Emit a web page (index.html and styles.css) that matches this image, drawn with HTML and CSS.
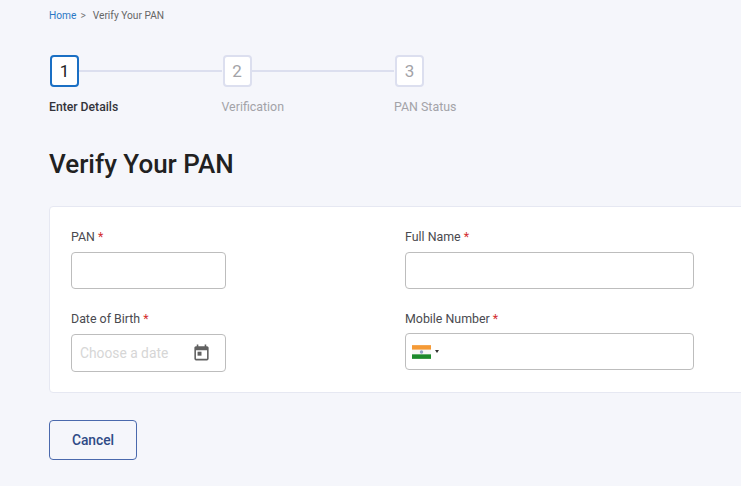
FILE: index.html
```html
<!DOCTYPE html>
<html>
<head>
  <title>Verify Your PAN</title>
  <link rel="stylesheet" href="styles.css">
</head>
<body>
  <div class="page">
    <div class="breadcrumb">
      <a class="crumb-link">Home</a>
      <span class="crumb-sep">&gt;</span>
      <span class="crumb-current">Verify Your PAN</span>
    </div>

    <div class="stepper">
      <div class="step step-active">
        <div class="step-row">
          <div class="step-box">1</div>
          <div class="step-line"></div>
        </div>
        <div class="step-label">Enter Details</div>
      </div>
      <div class="step">
        <div class="step-row">
          <div class="step-box">2</div>
          <div class="step-line"></div>
        </div>
        <div class="step-label">Verification</div>
      </div>
      <div class="step">
        <div class="step-row">
          <div class="step-box">3</div>
        </div>
        <div class="step-label">PAN Status</div>
      </div>
    </div>

    <h1 class="title">Verify Your PAN</h1>

    <div class="card">
      <div class="form-grid">
        <div class="field">
          <label class="field-label">PAN <span class="req">*</span></label>
          <div class="input input-short"></div>
        </div>
        <div class="field">
          <label class="field-label">Full Name <span class="req">*</span></label>
          <div class="input input-long"></div>
        </div>
        <div class="field">
          <label class="field-label">Date of Birth <span class="req">*</span></label>
          <div class="input input-short input-date">
            <span class="placeholder">Choose a date</span>
            <svg class="cal-icon" viewBox="0 0 24 24" width="19" height="19">
              <path fill="#616161" d="M19 4h-1V2h-2v2H8V2H6v2H5c-1.1 0-2 .9-2 2v14c0 1.1.9 2 2 2h14c1.1 0 2-.9 2-2V6c0-1.100-.9-2-2-2zm0 16H5V9h14v11z"/>
              <rect fill="#616161" x="7" y="11" width="5" height="5"/>
            </svg>
          </div>
        </div>
        <div class="field field-mobile">
          <label class="field-label">Mobile Number <span class="req">*</span></label>
          <div class="input input-long input-phone">
            <svg class="flag" viewBox="0 0 18 13" width="19" height="14">
              <rect width="18" height="4.400" fill="#f59a36"/>
              <rect y="4.400" width="18" height="4.300" fill="#f7f7f7"/>
              <rect y="8.700" width="18" height="4.300" fill="#1d8a2c"/>
              <circle cx="9" cy="6.500" r="1.600" fill="#8f9fc4"/>
            </svg>
            <span class="caret"></span>
          </div>
        </div>
      </div>
    </div>

    <button class="btn-cancel">Cancel</button>
  </div>
</body>
</html>
```

FILE: styles.css
```css
html, body {
  margin: 0;
  height: 100%;
  overflow: hidden;
}

body {
  background-color: #f5f6fb;
  font-family: Roboto, sans-serif;
  color: #212121;
}

.page {
  padding: 9px 0 0 49px;
  width: 800px;
}

.breadcrumb {
  font-size: 10.200px;
  line-height: 13px;
  height: 13px;
  display: flex;
  align-items: center;
}

.crumb-link {
  color: #2b78c5;
}

.crumb-sep {
  color: #777;
  margin: 0 7px 0 4px;
}

.crumb-current {
  color: #666;
}

.stepper {
  display: flex;
  margin-top: 33px;
}

.step {
  width: 172.500px;
  flex: none;
  color: #a3a3a8;
}

.step-row {
  display: flex;
  align-items: center;
  padding-left: 1px;
}

.step-box {
  width: 29px;
  height: 32px;
  box-sizing: border-box;
  border: 2px solid #dcdfef;
  border-radius: 4px;
  background: #fff;
  font-size: 17px;
  display: flex;
  align-items: center;
  justify-content: center;
  flex: none;
}

.step-line {
  flex: 1;
  height: 2px;
  background: #dcdfef;
}

.step-label {
  margin-top: 12px;
  font-size: 12.400px;
  line-height: 16px;
}

.step-active {
  color: #212121;
}

.step-active .step-box {
  border-color: #1a6fc4;
}

.step-active .step-label {
  font-size: 12.200px;
  font-weight: 500;
  color: #33333a;
}

.title {
  margin: 33px 0 0;
  font-size: 26px;
  line-height: 32px;
  font-weight: 500;
  color: #212121;
}

.card {
  margin-top: 26px;
  height: 187px;
  box-sizing: border-box;
  padding: 22px 21px;
  background: #fff;
  border: 1px solid #e6e8f2;
  border-radius: 4px;
}

.form-grid {
  display: grid;
  grid-template-columns: 334px 1fr;
  row-gap: 22px;
}

.field-label {
  display: block;
  font-size: 12.400px;
  line-height: 16px;
  color: #4a4a4f;
  margin-bottom: 7px;
}

.req {
  color: #d32f2f;
}

.input {
  box-sizing: border-box;
  height: 37px;
  background: #fff;
  border: 1px solid #bdbdbd;
  border-radius: 4px;
}

.input-short {
  width: 155px;
}

.input-long {
  width: 289px;
}

.input-date {
  height: 38px;
  display: flex;
  align-items: center;
  justify-content: space-between;
  padding: 0 14px 1px 8px;
}

.placeholder {
  font-size: 13.800px;
  color: #d6d6d6;
}

.cal-icon {
  flex: none;
}

.field-mobile .input {
  margin-top: -1px;
}

.input-phone {
  display: flex;
  align-items: center;
  padding-left: 6px;
}

.flag {
  flex: none;
}

.caret {
  margin-left: 4px;
  border-left: 2.500px solid transparent;
  border-right: 2.500px solid transparent;
  border-top: 3px solid #333;
}

.btn-cancel {
  display: block;
  margin-top: 27px;
  width: 88px;
  height: 40px;
  background: transparent;
  border: 1px solid #4a69ad;
  border-radius: 4px;
  font-family: Roboto, sans-serif;
  font-size: 13.800px;
  font-weight: 500;
  color: #2f4a86;
  cursor: pointer;
}
```
